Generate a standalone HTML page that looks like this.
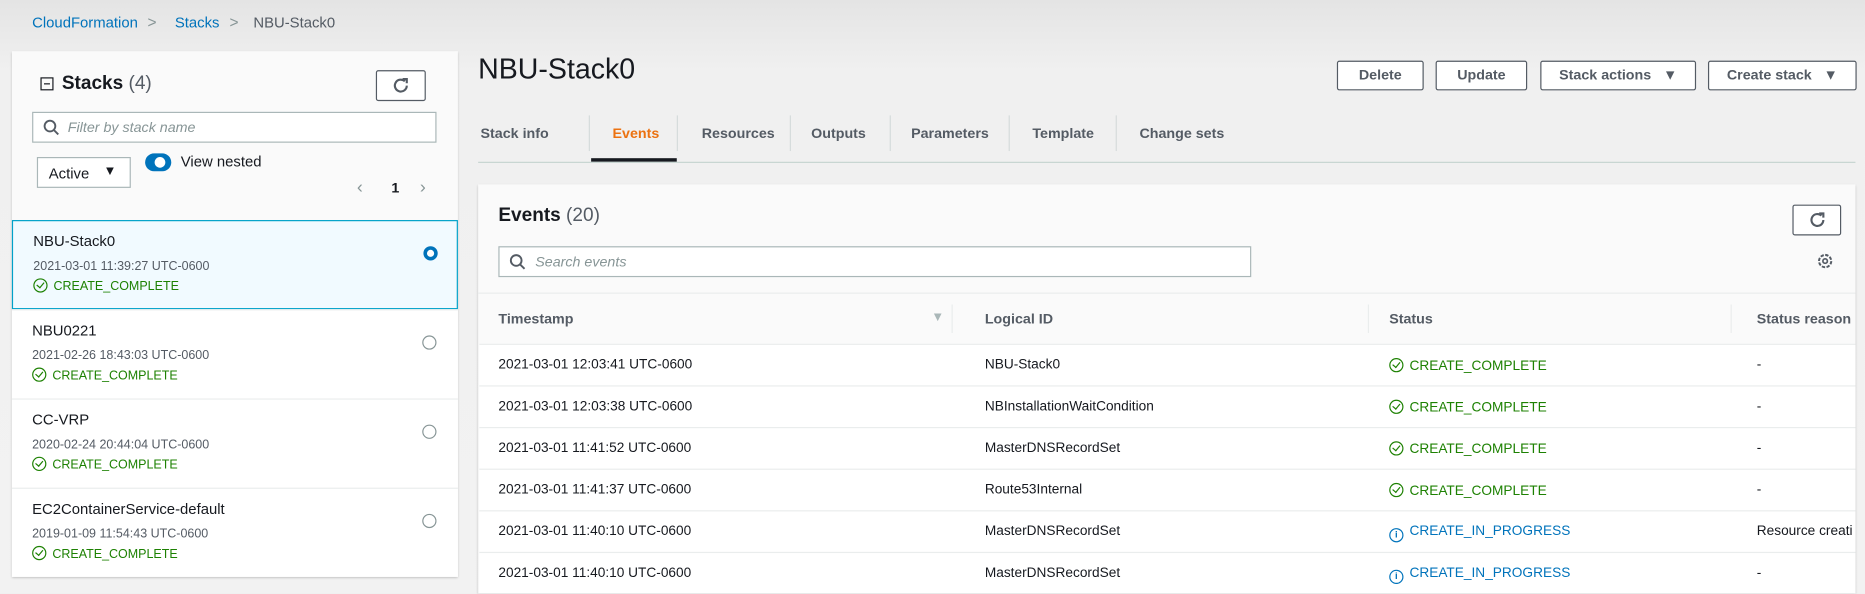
<!DOCTYPE html>
<html><head><meta charset="utf-8"><style>
*{box-sizing:border-box;margin:0;padding:0}
html,body{width:1865px;height:593px;overflow:hidden;background:#efefef}
#w{position:absolute;left:0;top:0;width:1568px;height:499px;transform:scale(1.1894);transform-origin:0 0;font-family:"Liberation Sans",sans-serif;color:#16191f;background:linear-gradient(#e4e4e4,#f0f0f0 60px,#f2f2f2)}
.a{position:absolute;white-space:nowrap}
.btn{position:absolute;border:1px solid #545b64;background:#fff;font-size:12px;font-weight:bold;color:#545b64;text-align:center;line-height:22px;border-radius:2px;white-space:nowrap}
.tab{position:absolute;top:105px;font-size:12px;font-weight:bold;color:#545b64;white-space:nowrap}
.sep{position:absolute;top:97px;width:1px;height:30px;background:#d5dbdb}
.item{position:absolute;left:10px;width:375px;height:75px;border-top:1px solid #eaeded;background:#fff}
.item .n{position:absolute;left:17px;top:10px;font-size:12.5px}
.item .d{position:absolute;left:17px;top:32px;font-size:10.5px;color:#545b64}
.item .s{position:absolute;left:17px;top:48px;font-size:10.5px;color:#1d8102}
.ok{display:inline-block;width:12px;height:12px;border:1.5px solid #1d8102;border-radius:50%;vertical-align:-2px;margin-right:5px;position:relative}
.ok:after{content:"";position:absolute;left:2.5px;top:1px;width:3px;height:5px;border:solid #1d8102;border-width:0 1.5px 1.5px 0;transform:rotate(40deg)}
.inf{display:inline-block;width:12px;height:12px;border:1.5px solid #0073bb;border-radius:50%;vertical-align:-2px;margin-right:5px;font-size:8px;font-weight:bold;text-align:center;line-height:9px;color:#0073bb;font-style:normal}
.radio{position:absolute;left:345px;width:12px;height:12px;border:1px solid #879596;border-radius:50%;background:#fff}
.row{position:absolute;left:403px;width:1157px;height:35px;background:#fff;border-top:1px solid #eaeded;font-size:11.5px;overflow:hidden}
.row span{position:absolute;top:11px;white-space:nowrap}
</style></head><body><div id="w">
<div class="a" style="left:27px;top:12px;font-size:12.5px;color:#0073bb">CloudFormation</div>
<div class="a" style="left:124px;top:11px;font-size:13px;color:#879596">&gt;</div>
<div class="a" style="left:147px;top:12px;font-size:12.5px;color:#0073bb">Stacks</div>
<div class="a" style="left:193px;top:11px;font-size:13px;color:#879596">&gt;</div>
<div class="a" style="left:213px;top:12px;font-size:12.5px;color:#545b64">NBU-Stack0</div>

<div class="a" style="left:10px;top:43px;width:375px;height:442px;background:#fafafa;box-shadow:0 1px 2px rgba(0,0,0,.25)"></div>
<div class="a" style="left:34px;top:65px;width:11px;height:11px;border:1px solid #16191f"></div>
<div class="a" style="left:37px;top:70px;width:5px;height:1px;background:#16191f"></div>
<div class="a" style="left:52px;top:62px;font-size:16px;font-weight:bold">Stacks <span style="font-weight:normal;color:#545b64">(4)</span></div>
<div class="btn" style="left:316px;top:59px;width:42px;height:26px"><svg width="16" height="16" viewBox="0 0 16 16" style="margin-top:4px"><path d="M13 8a5 5 0 1 1-1.6-3.7" fill="none" stroke="#545b64" stroke-width="1.8"/><path d="M9.5 2.5h3.5v3.5" fill="none" stroke="#545b64" stroke-width="1.8"/></svg></div>
<div class="a" style="left:27px;top:94px;width:340px;height:26px;border:1px solid #aab7b8;background:#fff"></div>
<svg class="a" style="left:36px;top:100px" width="14" height="14" viewBox="0 0 14 14"><circle cx="6" cy="6" r="4.5" fill="none" stroke="#545b64" stroke-width="1.6"/><path d="M9.5 9.5l3.5 3.5" stroke="#545b64" stroke-width="1.6"/></svg>
<div class="a" style="left:57px;top:100px;font-size:12px;font-style:italic;color:#879596">Filter by stack name</div>
<div class="a" style="left:31px;top:132px;width:79px;height:26px;border:1px solid #aab7b8;background:#fff;font-size:12.5px;padding:6px 0 0 9px">Active <span style="position:absolute;left:55px;top:5px;font-size:11px">▼</span></div>
<div class="a" style="left:122px;top:129px;width:22px;height:15px;border-radius:8px;background:#0073bb"></div>
<div class="a" style="left:130px;top:132px;width:9px;height:9px;border-radius:50%;background:#fff"></div>
<div class="a" style="left:152px;top:129px;font-size:12.5px">View nested</div>
<div class="a" style="left:300px;top:149px;font-size:15px;color:#879596">&#8249;</div>
<div class="a" style="left:329px;top:151px;font-size:12px;font-weight:bold">1</div>
<div class="a" style="left:353px;top:149px;font-size:15px;color:#879596">&#8250;</div>

<div class="item" style="top:185px;background:#f1faff;border:1px solid #00a1c9;"><div class="n">NBU-Stack0</div><div class="d">2021-03-01 11:39:27 UTC-0600</div><div class="s"><i class="ok"></i>CREATE_COMPLETE</div><div class="radio" style="top:21px;border:3.5px solid #0073bb"></div></div>
<div class="item" style="top:260px"><div class="n">NBU0221</div><div class="d">2021-02-26 18:43:03 UTC-0600</div><div class="s"><i class="ok"></i>CREATE_COMPLETE</div><div class="radio" style="top:21px"></div></div>
<div class="item" style="top:335px"><div class="n">CC-VRP</div><div class="d">2020-02-24 20:44:04 UTC-0600</div><div class="s"><i class="ok"></i>CREATE_COMPLETE</div><div class="radio" style="top:21px"></div></div>
<div class="item" style="top:410px;height:75px"><div class="n">EC2ContainerService-default</div><div class="d">2019-01-09 11:54:43 UTC-0600</div><div class="s"><i class="ok"></i>CREATE_COMPLETE</div><div class="radio" style="top:21px"></div></div>

<div class="a" style="left:402px;top:45px;font-size:24px">NBU-Stack0</div>
<div class="btn" style="left:1124px;top:51px;width:73px;height:25px">Delete</div>
<div class="btn" style="left:1207px;top:51px;width:77px;height:25px">Update</div>
<div class="btn" style="left:1295px;top:51px;width:131px;height:25px">Stack actions &nbsp;&nbsp;▼</div>
<div class="btn" style="left:1436px;top:51px;width:125px;height:25px">Create stack &nbsp;&nbsp;▼</div>

<div class="tab" style="left:404px">Stack info</div>
<div class="sep" style="left:495px"></div>
<div class="tab" style="left:515px;color:#ec7211">Events</div>
<div class="a" style="left:497px;top:133px;width:72px;height:3px;background:#16191f"></div>
<div class="sep" style="left:569px"></div>
<div class="tab" style="left:590px">Resources</div>
<div class="sep" style="left:664px"></div>
<div class="tab" style="left:682px">Outputs</div>
<div class="sep" style="left:748px"></div>
<div class="tab" style="left:766px">Parameters</div>
<div class="sep" style="left:848px"></div>
<div class="tab" style="left:868px">Template</div>
<div class="sep" style="left:938px"></div>
<div class="tab" style="left:958px">Change sets</div>
<div class="a" style="left:402px;top:136px;width:1158px;height:1px;background:#c6d4d0"></div>

<div class="a" style="left:402px;top:155px;width:1158px;height:344px;background:#fafafa;box-shadow:0 1px 2px rgba(0,0,0,.2)"></div>
<div class="a" style="left:419px;top:173px;font-size:16px;font-weight:bold">Events <span style="font-weight:normal;color:#545b64">(20)</span></div>
<div class="btn" style="left:1507px;top:172px;width:41px;height:26px"><svg width="16" height="16" viewBox="0 0 16 16" style="margin-top:4px"><path d="M13 8a5 5 0 1 1-1.6-3.7" fill="none" stroke="#545b64" stroke-width="1.8"/><path d="M9.5 2.5h3.5v3.5" fill="none" stroke="#545b64" stroke-width="1.8"/></svg></div>
<svg class="a" style="left:1527px;top:212px" width="15" height="15" viewBox="0 0 16 16"><circle cx="8" cy="8" r="5.5" fill="none" stroke="#545b64" stroke-width="1.8" stroke-dasharray="3 1.3"/><circle cx="8" cy="8" r="2" fill="none" stroke="#545b64" stroke-width="1.5"/></svg>
<div class="a" style="left:419px;top:207px;width:633px;height:26px;border:1px solid #aab7b8;background:#fff"></div>
<svg class="a" style="left:428px;top:213px" width="14" height="14" viewBox="0 0 14 14"><circle cx="6" cy="6" r="4.5" fill="none" stroke="#545b64" stroke-width="1.6"/><path d="M9.5 9.5l3.5 3.5" stroke="#545b64" stroke-width="1.6"/></svg>
<div class="a" style="left:450px;top:213px;font-size:12px;font-style:italic;color:#879596">Search events</div>
<div class="a" style="left:402px;top:246px;width:1158px;height:1px;background:#eaeded"></div>
<div class="a" style="left:419px;top:261px;font-size:12px;font-weight:bold;color:#545b64">Timestamp</div>
<div class="a" style="left:783px;top:261px;font-size:11px;color:#aab7b8">▼</div>
<div class="a" style="left:800px;top:256px;width:1px;height:24px;background:#eaeded"></div>
<div class="a" style="left:828px;top:261px;font-size:12px;font-weight:bold;color:#545b64">Logical ID</div>
<div class="a" style="left:1150px;top:256px;width:1px;height:24px;background:#eaeded"></div>
<div class="a" style="left:1168px;top:261px;font-size:12px;font-weight:bold;color:#545b64">Status</div>
<div class="a" style="left:1455px;top:256px;width:1px;height:24px;background:#eaeded"></div>
<div class="a" style="left:1477px;top:261px;font-size:12px;font-weight:bold;color:#545b64">Status reason</div>

<div class="row" style="top:289px"><span style="left:16px">2021-03-01 12:03:41 UTC-0600</span><span style="left:425px">NBU-Stack0</span><span style="left:765px;color:#1d8102"><i class="ok"></i>CREATE_COMPLETE</span><span style="left:1074px">-</span></div>
<div class="row" style="top:324px"><span style="left:16px">2021-03-01 12:03:38 UTC-0600</span><span style="left:425px">NBInstallationWaitCondition</span><span style="left:765px;color:#1d8102"><i class="ok"></i>CREATE_COMPLETE</span><span style="left:1074px">-</span></div>
<div class="row" style="top:359px"><span style="left:16px">2021-03-01 11:41:52 UTC-0600</span><span style="left:425px">MasterDNSRecordSet</span><span style="left:765px;color:#1d8102"><i class="ok"></i>CREATE_COMPLETE</span><span style="left:1074px">-</span></div>
<div class="row" style="top:394px"><span style="left:16px">2021-03-01 11:41:37 UTC-0600</span><span style="left:425px">Route53Internal</span><span style="left:765px;color:#1d8102"><i class="ok"></i>CREATE_COMPLETE</span><span style="left:1074px">-</span></div>
<div class="row" style="top:429px"><span style="left:16px">2021-03-01 11:40:10 UTC-0600</span><span style="left:425px">MasterDNSRecordSet</span><span style="left:765px;color:#0073bb"><i class="inf">i</i>CREATE_IN_PROGRESS</span><span style="left:1074px">Resource creati</span></div>
<div class="row" style="top:464px;height:35px"><span style="left:16px">2021-03-01 11:40:10 UTC-0600</span><span style="left:425px">MasterDNSRecordSet</span><span style="left:765px;color:#0073bb"><i class="inf">i</i>CREATE_IN_PROGRESS</span><span style="left:1074px">-</span></div>
</div></body></html>
